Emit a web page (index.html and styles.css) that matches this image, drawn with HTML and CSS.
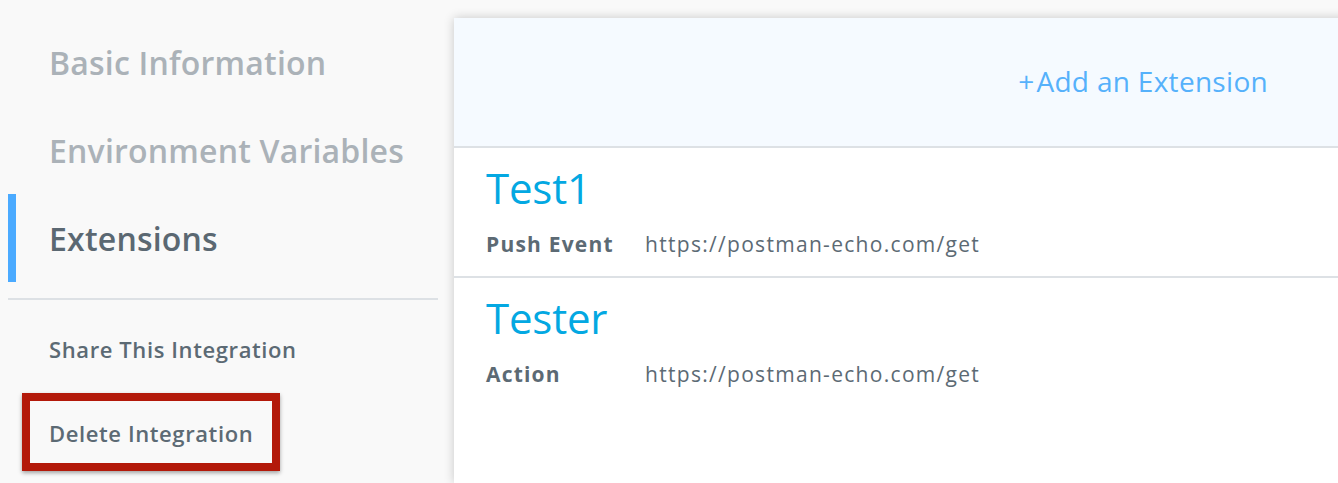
FILE: index.html
```html
<!DOCTYPE html>
<html>
<head>
<meta charset="utf-8">
<link rel="stylesheet" href="styles.css">
</head>
<body>
<div class="layout">
  <aside class="sidebar">
    <nav class="nav">
      <div class="nav-item">Basic Information</div>
      <div class="nav-item">Environment Variables</div>
      <div class="nav-item active">Extensions</div>
    </nav>
    <div class="divider"></div>
    <div class="actions">
      <div class="action">Share This Integration</div>
      <div class="action highlighted">Delete Integration<span class="annot"></span></div>
    </div>
  </aside>
  <main class="panel">
    <div class="panel-header">
      <span class="add-link"><span class="plus">+</span>Add an Extension</span>
    </div>
    <div class="ext-row">
      <div class="ext-title">Test1</div>
      <div class="ext-meta">
        <span class="ext-label">Push Event</span>
        <span class="ext-url">https://postman-echo.com/get</span>
      </div>
    </div>
    <div class="ext-row">
      <div class="ext-title">Tester</div>
      <div class="ext-meta">
        <span class="ext-label">Action</span>
        <span class="ext-url">https://postman-echo.com/get</span>
      </div>
    </div>
  </main>
</div>
</body>
</html>
```
FILE: styles.css
```css
html, body {
  margin: 0;
  padding: 0;
  background: #f9f9f9;
  font-family: "Open Sans", "Liberation Sans", sans-serif;
  overflow: hidden;
}

.layout {
  display: flex;
  padding-top: 18px;
  height: 465px;
}

.sidebar {
  width: 430px;
  margin-left: 8px;
  flex: none;
}

.nav-item {
  height: 88px;
  display: flex;
  align-items: center;
  padding-left: 41px;
  font-size: 32px;
  font-weight: 600;
  color: #abb2b8;
  letter-spacing: 0.2px;
}

.nav-item.active {
  color: #5b6872;
  box-shadow: inset 8px 0 0 #4aaaff;
}

.divider {
  margin-top: 16px;
  height: 2px;
  background: #dde1e5;
}

.actions {
  padding-top: 7px;
}

.action {
  position: relative;
  height: 84px;
  display: flex;
  align-items: center;
  padding-left: 41px;
  font-size: 22px;
  font-weight: 600;
  color: #5c6a74;
  letter-spacing: 0.6px;
}

.annot {
  position: absolute;
  left: 14px;
  top: 2px;
  width: 242px;
  height: 62px;
  border: 8px solid #b3190a;
  box-shadow: 0 2px 4px rgba(0, 0, 0, 0.35);
}

.panel {
  flex: 1;
  margin-left: 16px;
  margin-right: -20px;
  background: #ffffff;
  box-shadow: 0 0 10px rgba(0, 0, 0, 0.2);
}

.panel-header {
  height: 128px;
  background: #f5faff;
  border-bottom: 2px solid #dde1e5;
  display: flex;
  align-items: center;
  justify-content: flex-end;
  padding-right: 90px;
}

.add-link {
  font-size: 28px;
  color: #55b1fb;
  letter-spacing: 0.3px;
  padding-bottom: 2px;
}

.plus {
  margin-right: 2px;
}

.ext-row {
  padding: 14px 0 18px 32px;
  border-bottom: 2px solid #dde1e5;
}

.ext-row:last-child {
  border-bottom: none;
}

.ext-title {
  font-size: 42px;
  line-height: 52px;
  color: #03a8e2;
  letter-spacing: -0.2px;
}

.ext-meta {
  display: flex;
  margin-top: 16px;
  line-height: 28px;
  font-size: 21px;
  color: #5c6a74;
}

.ext-label {
  width: 159px;
  font-weight: 700;
  letter-spacing: 1.2px;
}

.ext-url {
  letter-spacing: 1.3px;
}
```
